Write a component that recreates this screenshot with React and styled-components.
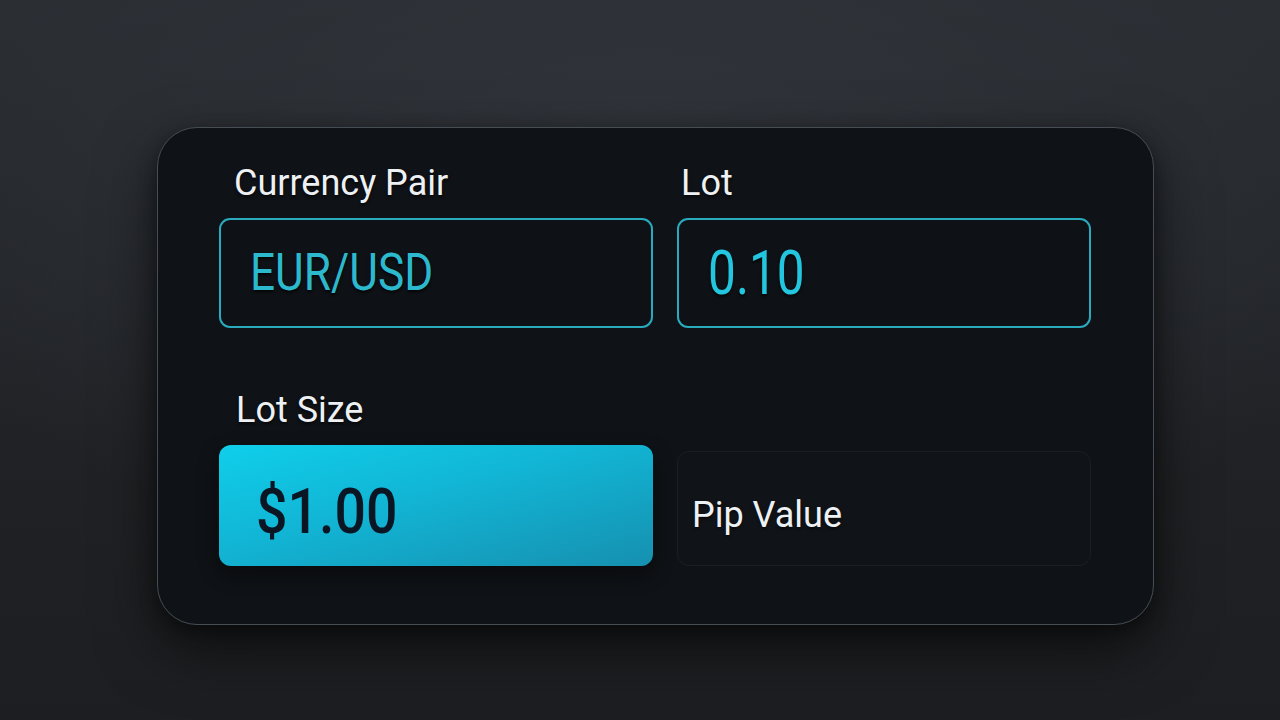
import React from "react"
import styled, { createGlobalStyle } from "styled-components"

const GlobalStyle = createGlobalStyle`
  html, body {
    margin: 0;
    padding: 0;
    background: #1f2124;
  }
  * {
    box-sizing: border-box;
  }
`

const Page = styled.div`
  width: 1280px;
  height: 720px;
  overflow: hidden;
  padding: 127px 0 0 157px;
  background:
    radial-gradient(ellipse 70% 60% at 50% 18%, #30343a 0%, rgba(48, 52, 58, 0) 100%),
    linear-gradient(180deg, #292c31 0%, #202225 60%, #1c1e21 100%);
`

const Card = styled.div`
  width: 997px;
  height: 498px;
  padding: 37px 62px 0 61px;
  border: 1px solid #474d54;
  border-radius: 40px;
  background: #0f1216;
  box-shadow: 0 24px 60px rgba(0, 0, 0, 0.55), 0 6px 18px rgba(0, 0, 0, 0.4);
  display: grid;
  grid-template-columns: 434px 414px;
  align-content: start;
  column-gap: 24px;
  row-gap: 64px;
`

const Field = styled.div`
  display: flex;
  flex-direction: column;
  gap: 17px;
`

const Label = styled.div`
  padding-left: ${props => props.indent || 0}px;
  font-family: Roboto, "Noto Sans", sans-serif;
  font-size: 36px;
  line-height: 36px;
  color: #eef1f4;
  text-shadow: 0 2px 3px rgba(0, 0, 0, 0.6);
`

const Input = styled.div`
  display: flex;
  align-items: center;
  height: 110px;
  padding-left: 29px;
  border: 2px solid #2aaabd;
  border-radius: 11px;
  background: #0e1115;
  color: ${props => props.color};
  text-shadow: 0 2px 3px rgba(0, 0, 0, 0.7);
`

// narrow display face for the numbers
const Value = styled.span`
  display: inline-block;
  font-family: Roboto, "Noto Sans", sans-serif;
  font-size: ${props => props.size}px;
  font-weight: ${props => props.weight || 400};
  line-height: 1;
  transform: scaleX(${props => props.squeeze || 0.85});
  transform-origin: left center;
  white-space: nowrap;
`

const Result = styled.div`
  display: flex;
  align-items: center;
  height: 121px;
  padding: 12px 0 0 37px;
  border-radius: 12px;
  background: linear-gradient(165deg, #0fcfea 0%, #12b4d4 45%, #1690b0 100%);
  box-shadow: 0 8px 20px rgba(0, 0, 0, 0.45);
  color: #0a1624;
`

const PipBox = styled.div`
  align-self: end;
  display: flex;
  align-items: center;
  height: 115px;
  padding: 12px 0 0 14px;
  border: 1px solid #1b1f24;
  border-radius: 12px;
  background: #101419;
  font-family: Roboto, "Noto Sans", sans-serif;
  font-size: 36px;
  color: #eef1f4;
  text-shadow: 0 2px 3px rgba(0, 0, 0, 0.6);
`

export default function App() {
  return (
    <Page>
      <GlobalStyle />
      <Card>
        <Field>
          <Label indent={15}>Currency Pair</Label>
          <Input color="#2db9cd">
            <Value size={52} squeeze={0.85}>EUR/USD</Value>
          </Input>
        </Field>
        <Field>
          <Label indent={4}>Lot</Label>
          <Input color="#22c6df">
            <Value size={62} squeeze={0.8}>0.10</Value>
          </Input>
        </Field>
        <Field>
          <Label indent={17}>Lot Size</Label>
          <Result>
            <Value size={63} squeeze={0.88} weight={500}>$1.00</Value>
          </Result>
        </Field>
        <PipBox>Pip Value</PipBox>
      </Card>
    </Page>
  )
}
